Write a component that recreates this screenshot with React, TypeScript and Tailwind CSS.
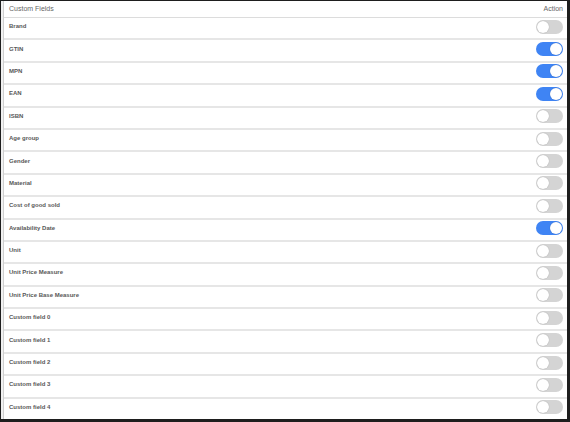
import { useState } from "react";

const FIELDS: { label: string; on: boolean }[] = [
  { label: "Brand", on: false },
  { label: "GTIN", on: true },
  { label: "MPN", on: true },
  { label: "EAN", on: true },
  { label: "ISBN", on: false },
  { label: "Age group", on: false },
  { label: "Gender", on: false },
  { label: "Material", on: false },
  { label: "Cost of good sold", on: false },
  { label: "Availability Date", on: true },
  { label: "Unit", on: false },
  { label: "Unit Price Measure", on: false },
  { label: "Unit Price Base Measure", on: false },
  { label: "Custom field 0", on: false },
  { label: "Custom field 1", on: false },
  { label: "Custom field 2", on: false },
  { label: "Custom field 3", on: false },
  { label: "Custom field 4", on: false },
];

function Toggle({ on, onClick }: { on: boolean; onClick: () => void }) {
  return (
    <button
      onClick={onClick}
      className={`relative h-[14px] w-[27px] shrink-0 rounded-full transition-colors ${
        on ? "bg-[#3f84f4]" : "bg-[#d4d4d4]"
      }`}
    >
      <span
        className={`absolute top-[1px] h-[12px] w-[12px] rounded-full bg-white shadow-[0_0_1px_rgba(0,0,0,0.3)] ${
          on ? "right-[1px]" : "left-[1px]"
        }`}
      />
    </button>
  );
}

export default function App() {
  const [fields, setFields] = useState(FIELDS);

  return (
    <div
      className="flex h-[422px] w-[570px] border-t border-l border-r-[3px] border-b-[3px] border-[#1e1e1e] bg-[#f1f1f1] pl-[2px]"
      style={{ fontFamily: '"Liberation Sans", Arial, sans-serif' }}
    >
      <div className="flex flex-1 flex-col border-l border-[#cfcfcf] bg-white">
        <div className="flex h-[17px] shrink-0 items-center justify-between border-b border-[#dcdcdc] pl-[5px] pr-[4px] text-[7px] text-[#666]">
          <span>Custom Fields</span>
          <span>Action</span>
        </div>
        {fields.map((f, i) => (
          <div
            key={f.label}
            className="flex flex-1 items-center justify-between border-b-2 border-[#e6e6e6] pb-[3px] pl-[5px] pr-[4px] last:border-b-0"
          >
            <span className="text-[6px] font-bold text-[#585858]">{f.label}</span>
            <Toggle
              on={f.on}
              onClick={() =>
                setFields((prev) => prev.map((p, j) => (j === i ? { ...p, on: !p.on } : p)))
              }
            />
          </div>
        ))}
      </div>
    </div>
  );
}
